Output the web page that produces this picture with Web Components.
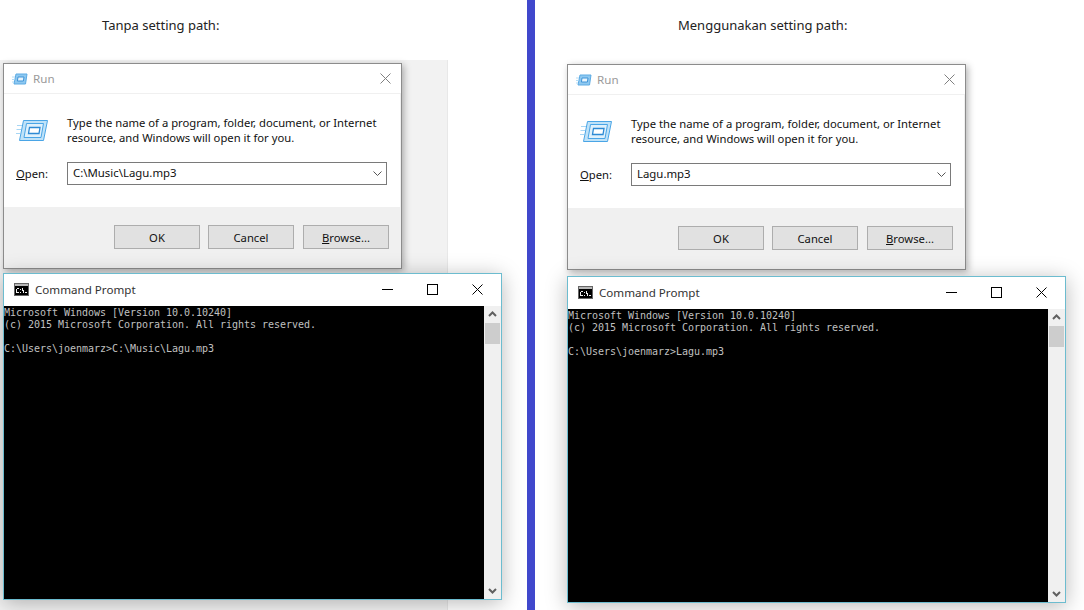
<!DOCTYPE html>
<html lang="id">
<head>
<meta charset="utf-8">
<title>Setting path</title>
<style>
  html, body { margin: 0; background: #fff; overflow: hidden; }
</style>
</head>
<body>
<compare-page>
  <compare-panel slot="left" heading="Tanpa setting path:" heading-left="102" backdrop>
    <run-dialog x="3" y="63" value="C:\Music\Lagu.mp3"></run-dialog>
    <cmd-window x="3" y="273" command="C:\Music\Lagu.mp3"></cmd-window>
  </compare-panel>
  <compare-panel slot="right" heading="Menggunakan setting path:" heading-left="143">
    <run-dialog x="32" y="64" value="Lagu.mp3"></run-dialog>
    <cmd-window x="32" y="276" command="Lagu.mp3"></cmd-window>
  </compare-panel>
</compare-page>

<script>
// Custom Html Elements: <compare-page>, <compare-panel>, <run-dialog>, <cmd-window>, <win-button>

const UI_FONT = `"Noto Sans", "Open Sans", sans-serif`;

class ComparePage extends HTMLElement {
  constructor() {
    super();
    this.attachShadow({ mode: "open" });
    this.shadowRoot.innerHTML = `
        <style>
            :host {
                display: grid;
                grid-template-columns: 527px 8px 1fr;
                height: 610px;
                overflow: hidden;
                font-family: ${UI_FONT};
            }
            #divider {
                background: #4048cc;
            }
        </style>
        <slot name="left"></slot>
        <div id="divider"></div>
        <slot name="right"></slot>
        `;
  }
}

class ComparePanel extends HTMLElement {
  constructor() {
    super();
    this.attachShadow({ mode: "open" });
    this.shadowRoot.innerHTML = `
        <style>
            :host {
                display: block;
                position: relative;
                height: 610px;
                overflow: hidden;
            }
            h2 {
                margin: 0;
                padding-top: 16px;
                font-size: 13px;
                line-height: 18px;
                font-weight: 400;
                color: #222;
            }
            #backdrop {
                display: none;
                position: absolute;
                left: 0;
                top: 60px;
                width: 447px;
                bottom: 0;
                background: #f2f2f2;
                border-right: 1px solid #e8e8e8;
            }
            :host([backdrop]) #backdrop {
                display: block;
            }
        </style>
        <div id="backdrop"></div>
        <h2 id="heading"></h2>
        <slot></slot>
        `;
  }

  connectedCallback() {
    const heading = this.shadowRoot.querySelector("#heading");
    heading.textContent = this.getAttribute("heading");
    heading.style.paddingLeft = `${this.getAttribute("heading-left")}px`;
  }
}

class WinButton extends HTMLElement {
  constructor() {
    super();
    this.attachShadow({ mode: "open" });
    this.shadowRoot.innerHTML = `
        <style>
            :host {
                display: flex;
                align-items: center;
                justify-content: center;
                box-sizing: border-box;
                width: 86px;
                height: 24px;
                background: #e1e1e1;
                border: 1px solid #adadad;
                font-size: 11.25px;
                color: #111;
            }
        </style>
        <slot></slot>
        `;
  }
}

class RunDialog extends HTMLElement {
  constructor() {
    super();
    this.attachShadow({ mode: "open" });
    this.shadowRoot.innerHTML = `
        <style>
            :host {
                display: block;
                position: absolute;
                box-sizing: border-box;
                width: 399px;
                height: 206px;
                background: #f0f0f0;
                border: 1px solid #8c8c8c;
                box-shadow: 2px 2px 7px rgba(0, 0, 0, 0.3);
                font-size: 11.25px;
                color: #111;
            }
            #title {
                display: flex;
                align-items: center;
                height: 29px;
                padding: 0 10px 0 8px;
                background: #fff;
                border-bottom: 1px solid #f0f0f0;
                color: #9a9a9a;
            }
            #title span {
                margin-left: 5px;
                flex: 1;
                font-size: 11.6px;
            }
            #body {
                box-sizing: border-box;
                height: 113px;
                margin-right: 1px;
                padding: 21px 13px 0 12px;
                background: #fff;
                display: grid;
                grid-template-columns: 51px 1fr;
                grid-template-rows: 47px 23px;
                align-items: start;
            }
            #body p {
                margin: 0;
                line-height: 15px;
            }
            #open-icon {
                margin-top: 5px;
            }
            #open-label u {
                text-decoration: underline;
            }
            #open-label {
                align-self: center;
            }
            #combo {
                box-sizing: border-box;
                height: 23px;
                border: 1px solid #7a7a7a;
                background: #fff;
                display: flex;
                align-items: center;
                padding: 0 4px 0 5px;
                font-size: 11.4px;
            }
            #combo span {
                flex: 1;
                padding-bottom: 2px;
            }
            #footer {
                display: flex;
                gap: 8px;
                justify-content: flex-end;
                padding: 18px 12px 0 0;
            }
            #footer win-button:last-child {
                margin-left: 1px;
            }
        </style>
        <div id="title">
            <svg width="16" height="12" viewBox="0 0 16 12">
                <path d="M4 1H15L13.5 11H2Z" fill="#8ec8f0" stroke="#5cabe4"/>
                <path d="M6 4H12L11.4 8H5.4Z" fill="#e8f4fc" stroke="#3f94d8"/>
                <path d="M0 4H3M0 6.5H2.5M0 9H2" stroke="#b4dcf5"/>
            </svg>
            <span>Run</span>
            <svg width="11" height="11" viewBox="0 0 11 11">
                <path d="M.5 .5L10.500 10.500M10.500 .5L.5 10.500" stroke="#808080" fill="none"/>
            </svg>
        </div>
        <div id="body">
            <svg id="open-icon" width="32" height="21" viewBox="0 0 32 21">
                <path d="M7.5 .5H31.5L27.5 20.5H3.5Z" fill="#bfe2f8" stroke="#4aa5e6"/>
                <path d="M10.5 3.5H27.5L25 17.5H8Z" fill="#dff1fc" stroke="#4aa5e6"/>
                <path d="M13.5 7.5H24L23 13.5H12.5Z" fill="#fff" stroke="#2d8ad4" stroke-width="1.3"/>
                <path d="M1 5.5H6M.5 9.5H5M0 13.5H4" stroke="#a7d6f4"/>
            </svg>
            <p>Type the name of a program, folder, document, or Internet<br>resource, and Windows will open it for you.</p>
            <div id="open-label"><u>O</u>pen:</div>
            <div id="combo">
                <span id="value"></span>
                <svg width="9" height="5" viewBox="0 0 9 5">
                    <path d="M.5 .5L4.500 4.500L8.500 .5" stroke="#555" fill="none"/>
                </svg>
            </div>
        </div>
        <div id="footer">
            <win-button>OK</win-button>
            <win-button>Cancel</win-button>
            <win-button><span><u>B</u>rowse...</span></win-button>
        </div>
        `;
  }

  connectedCallback() {
    this.style.left = `${this.getAttribute("x")}px`;
    this.style.top = `${this.getAttribute("y")}px`;
    this.shadowRoot.querySelector("#value").textContent =
      this.getAttribute("value");
  }
}

class CmdWindow extends HTMLElement {
  constructor() {
    super();
    this.attachShadow({ mode: "open" });
    this.shadowRoot.innerHTML = `
        <style>
            :host {
                display: flex;
                flex-direction: column;
                position: absolute;
                box-sizing: border-box;
                width: 499px;
                height: 327px;
                background: #fff;
                border: 1px solid #6cbccf;
                box-shadow: 0 3px 20px rgba(0, 0, 0, 0.28);
            }
            #title {
                display: flex;
                align-items: center;
                box-sizing: border-box;
                height: 32px;
                padding: 0 0 2px 10px;
                font-size: 11.6px;
                color: #333;
            }
            #title span {
                margin-left: 6px;
                flex: 1;
            }
            #controls {
                display: grid;
                grid-template-columns: repeat(3, 45px);
                justify-items: center;
                align-items: center;
                margin-right: 1px;
            }
            #main {
                flex: 1;
                display: flex;
                min-height: 0;
            }
            pre {
                flex: 1;
                margin: 0;
                background: #000;
                color: #c0c0c0;
                font-family: "DejaVu Sans Mono", "Liberation Mono", monospace;
                font-size: 10px;
                letter-spacing: -0.02px;
                line-height: 12px;
                padding-top: 1px;
            }
            #scroll {
                width: 17px;
                background: #f0f0f0;
                display: flex;
                flex-direction: column;
                align-items: center;
                padding-top: 5px;
                box-sizing: border-box;
            }
            #thumb {
                width: 15px;
                height: 21px;
                margin-top: 6px;
                background: #cdcdcd;
            }
            #down {
                margin-top: auto;
                margin-bottom: 5px;
            }
        </style>
        <div id="title">
            <svg width="15" height="13" viewBox="0 0 15 13">
                <rect x=".5" y=".5" width="14" height="12" fill="#000" stroke="#666"/>
                <rect x="1" y="1" width="13" height="2" fill="#b8b8b8"/>
                <path d="M3 5H5V6H3V9H5V10H2V6H3ZM6 6H7V7H6ZM6 9H7V10H6ZM8 5H9V7H10V10H9V8H8ZM11 9H13V10H11Z" fill="#f0f0f0"/>
            </svg>
            <span>Command Prompt</span>
            <div id="controls">
                <svg width="11" height="11" viewBox="0 0 11 11">
                    <path d="M0 5.500H11" stroke="#000"/>
                </svg>
                <svg width="11" height="11" viewBox="0 0 11 11">
                    <rect x=".5" y=".5" width="10" height="10" fill="none" stroke="#000"/>
                </svg>
                <svg width="11" height="11" viewBox="0 0 11 11">
                    <path d="M.5 .5L10.500 10.500M10.500 .5L.5 10.500" stroke="#000" fill="none"/>
                </svg>
            </div>
        </div>
        <div id="main">
            <pre id="console"></pre>
            <div id="scroll">
                <svg width="9" height="6" viewBox="0 0 9 6">
                    <path d="M1 5L4.500 1.500L8 5" stroke="#606060" stroke-width="2" fill="none"/>
                </svg>
                <div id="thumb"></div>
                <svg id="down" width="9" height="6" viewBox="0 0 9 6">
                    <path d="M1 1L4.500 4.500L8 1" stroke="#606060" stroke-width="2" fill="none"/>
                </svg>
            </div>
        </div>
        `;
  }

  connectedCallback() {
    this.style.left = `${this.getAttribute("x")}px`;
    this.style.top = `${this.getAttribute("y")}px`;
    this.shadowRoot.querySelector("#console").textContent =
      "Microsoft Windows [Version 10.0.10240]\n" +
      "(c) 2015 Microsoft Corporation. All rights reserved.\n\n" +
      `C:\\Users\\joenmarz>${this.getAttribute("command")}`;
  }
}

customElements.define("compare-page", ComparePage);
customElements.define("compare-panel", ComparePanel);
customElements.define("win-button", WinButton);
customElements.define("run-dialog", RunDialog);
customElements.define("cmd-window", CmdWindow);
</script>
</body>
</html>
